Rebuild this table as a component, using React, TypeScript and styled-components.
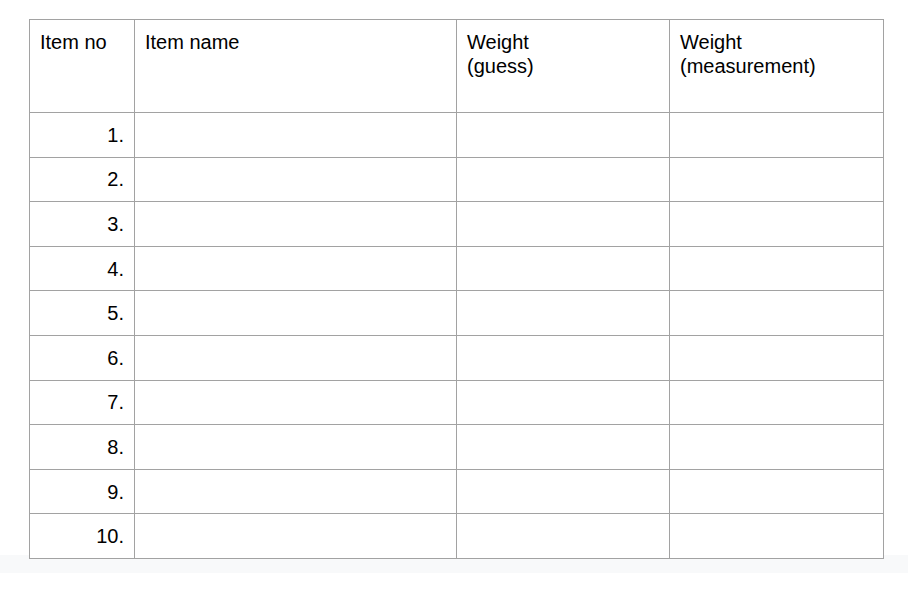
import React from "react";
import styled, { createGlobalStyle } from "styled-components";

const Global = createGlobalStyle`
  html, body {
    margin: 0;
    padding: 0;
    background: #ffffff;
  }
  body {
    font-family: "Liberation Sans", Arial, sans-serif;
  }
`;

const Page = styled.div`
  width: 908px;
  height: 605px;
  padding-top: 19px;
  box-sizing: border-box;
  display: flex;
  flex-direction: column;
`;

const Table = styled.table`
  position: relative;
  z-index: 1;
  margin-left: 29px;
  border-collapse: collapse;
  table-layout: fixed;
  width: 854px;
  background: #ffffff;
  font-family: "Liberation Sans", Arial, sans-serif;
  font-size: 20px;
  line-height: 24px;
  color: #000000;
`;

const HeadRow = styled.tr`
  height: 93px;
`;

const BodyRow = styled.tr`
  height: 44.6px;
`;

const HeadCell = styled.th`
  border: 1px solid #a2a2a2;
  padding: 10px 10px 0 10px;
  text-align: left;
  vertical-align: top;
  font-weight: normal;
`;

const Cell = styled.td<{ $num?: boolean }>`
  border: 1px solid #a2a2a2;
  padding: 0 10px 0 10px;
  text-align: ${(p) => (p.$num ? "right" : "left")};
  vertical-align: middle;
`;

const Strip = styled.div`
  margin-top: -4px;
  height: 18px;
  background: #f8f9fa;
`;

const rows = Array.from({ length: 10 }, (_, i) => i + 1);

export default function App() {
  return (
    <>
      <Global />
      <Page>
        <Table>
          <colgroup>
            <col style={{ width: 105 }} />
            <col style={{ width: 322 }} />
            <col style={{ width: 213 }} />
            <col style={{ width: 214 }} />
          </colgroup>
          <thead>
            <HeadRow>
              <HeadCell>Item no</HeadCell>
              <HeadCell>Item name</HeadCell>
              <HeadCell>
                Weight
                <br />
                (guess)
              </HeadCell>
              <HeadCell>
                Weight
                <br />
                (measurement)
              </HeadCell>
            </HeadRow>
          </thead>
          <tbody>
            {rows.map((n) => (
              <BodyRow key={n}>
                <Cell $num>{n}.</Cell>
                <Cell />
                <Cell />
                <Cell />
              </BodyRow>
            ))}
          </tbody>
        </Table>
        <Strip />
      </Page>
    </>
  );
}
